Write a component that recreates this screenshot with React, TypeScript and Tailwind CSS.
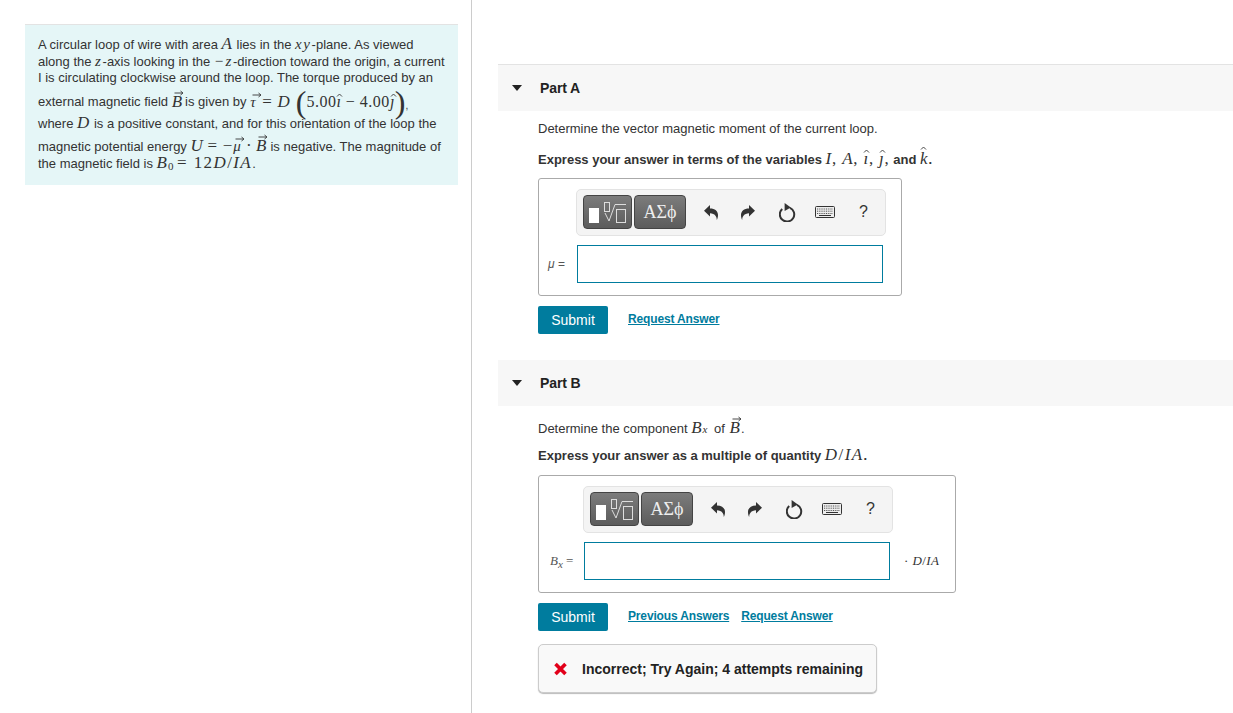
import React from 'react';

const mathFont = "font-['Liberation_Serif',serif] font-normal leading-[0]";

function V({ children }: { children: React.ReactNode }) {
  return <i className={`${mathFont} text-[17px] tracking-[1px]`}>{children}</i>;
}

function Low({ children }: { children: React.ReactNode }) {
  return <i className={`${mathFont} text-[15px] tracking-[1.6px]`}>{children}</i>;
}

function M({ children }: { children: React.ReactNode }) {
  return <span className={`${mathFont} text-[17px] tracking-[0.8px]`}>{children}</span>;
}

function Wide({ children }: { children: React.ReactNode }) {
  return <span className={`${mathFont} text-[17px] tracking-[1.4px]`}>{children}</span>;
}

function Over({ children, mark, top }: { children: React.ReactNode; mark: 'vec' | 'hat'; top?: string }) {
  return (
    <span className="relative">
      {mark === 'vec' ? (
        <svg className={`absolute left-[2px] ${top ?? 'top-[-2px]'}`} width="10" height="6" viewBox="0 0 10 6">
          <path d="M0.5 3H8.5M6.5 1L9 3L6.5 5" fill="none" stroke="currentColor" strokeWidth="0.9" />
        </svg>
      ) : (
        <svg className={`absolute left-[0px] ${top ?? 'top-[0px]'}`} width="7" height="4" viewBox="0 0 7 4">
          <path d="M1 3.5L3.5 1L6 3.5" fill="none" stroke="currentColor" strokeWidth="0.9" />
        </svg>
      )}
      {children}
    </span>
  );
}

function TemplateIcon() {
  return (
    <svg width="38" height="23" viewBox="0 0 38 23">
      <rect x="0" y="7" width="10" height="15" fill="#fff" />
      <rect x="15.5" y="1.5" width="5" height="9" fill="none" stroke="#ddd" strokeWidth="1" />
      <path d="M16 12L20 20L26 3.5H37" fill="none" stroke="#ddd" strokeWidth="1" />
      <rect x="27.5" y="8.5" width="9" height="13" fill="none" stroke="#ddd" strokeWidth="1" />
    </svg>
  );
}

function KeyboardIcon() {
  return (
    <svg width="20" height="12" viewBox="0 0 20 12">
      <rect x="0.5" y="0.5" width="19" height="11" rx="1" fill="#eee" stroke="#333" strokeWidth="1" />
      <path d="M2 3H18M2 5.2H18" stroke="#555" strokeWidth="1" strokeDasharray="1 0.8" />
      <path d="M2 7.5H18" stroke="#555" strokeWidth="1" strokeDasharray="1 0.8" />
      <path d="M4 9.5H16" stroke="#333" strokeWidth="1" />
    </svg>
  );
}

function ResetIcon() {
  return (
    <svg width="17" height="19" viewBox="0 0 17 19">
      <path d="M11 4.8A7.2 7.2 0 1 1 3.2 6" fill="none" stroke="#333" strokeWidth="2" />
      <path d="M5.6 0L11.8 4.6L5.6 8Z" fill="#333" />
    </svg>
  );
}

function UndoIcon({ flip }: { flip?: boolean }) {
  return (
    <svg className={flip ? '-scale-x-100' : ''} width="14" height="15" viewBox="0 0 14 15">
      <path d="M0 5.7L6 0V3.4C11 3.4 14 6 14 10C14 12 13.5 13.8 12.8 15C12.8 11.5 11 8.5 6 8.2V11.5Z" fill="#333" />
    </svg>
  );
}

function Toolbar() {
  return (
    <div className="flex h-[47px] w-[310px] items-center rounded-[5px] border border-[#e3e3e3] bg-[#f4f4f4] pb-[1px] pl-[6px]">
      <div className="flex h-[34px] w-[49px] items-center justify-center rounded-[4px] border border-[#444] bg-gradient-to-b from-[#7c7c7c] to-[#5c5c5c]">
        <TemplateIcon />
      </div>
      <div className="ml-[2px] flex h-[34px] w-[52px] items-center justify-center rounded-[4px] border border-[#444] bg-gradient-to-b from-[#7c7c7c] to-[#5c5c5c] font-['Liberation_Serif',serif] text-[18px] text-[#eee]">
        ΑΣϕ
      </div>
      <div className="ml-[18px] flex"><UndoIcon /></div>
      <div className="ml-[23px] flex"><UndoIcon flip /></div>
      <div className="ml-[24px] flex"><ResetIcon /></div>
      <div className="ml-[19px] flex"><KeyboardIcon /></div>
      <span className="ml-[24px] text-[16px] text-[#333]">?</span>
    </div>
  );
}

function AnswerBox({ className, label, labelPad, suffix }: { className: string; label: React.ReactNode; labelPad: string; suffix?: React.ReactNode }) {
  return (
    <div className={`${className} h-[118px] rounded-[3px] border border-[#aaa] bg-white pt-[10px]`}>
      <Toolbar />
      <div className="mt-[9px] flex items-center">
        <div className={`ml-[-38px] flex w-[39px] shrink-0 justify-start ${labelPad} text-[12px] text-[#555]`}>{label}</div>
        <div className="h-[38px] w-[306px] border border-[#007c9e] bg-white" />
        {suffix}
      </div>
    </div>
  );
}

function PartHeader({ title, className }: { title: string; className: string }) {
  return (
    <div className={`flex items-center bg-[#f7f7f7] ${className}`}>
      <span className="ml-[14px] h-0 w-0 border-x-[5.5px] border-t-[6px] border-x-transparent border-t-[#222]" />
      <span className="ml-[18px] text-[14px] font-bold tracking-[-0.1px] text-[#222]">{title}</span>
    </div>
  );
}

function SubmitButton() {
  return (
    <button className="flex h-[28px] w-[70px] items-center justify-center rounded-[2px] bg-[#007c9e] text-[14px] text-white">Submit</button>
  );
}

function LinkText({ children }: { children: React.ReactNode }) {
  return <a className="text-[12px] font-bold tracking-[-0.15px] text-[#007c9e] underline">{children}</a>;
}

export default function App() {
  return (
    <div className="flex h-[713px] w-[1233px] overflow-hidden bg-white font-['Liberation_Sans',Arial,sans-serif] text-[#333]">
      <div className="h-full w-[472px] shrink-0 border-r border-[#ccc] pl-[25px] pt-[24px]">
        <div className="h-[161px] w-[433px] border-t border-[#e3e3e3] bg-[#e5f6f7] pl-[13px] pt-[12px] text-[13px] leading-[16px] whitespace-nowrap">
          <div>A circular loop of wire with area <V>A</V> lies in the <Low>xy</Low>-plane. As viewed</div>
          <div className="mt-[1px]">along the <Low>z</Low>-axis looking in the <Low>−z</Low>-direction toward the origin, a current</div>
          <div>I is circulating clockwise around the loop. The torque produced by an</div>
          <div className="flex h-[32px] items-center">
            <span>external magnetic field&nbsp;</span>
            <V><Over mark="vec">B</Over></V>
            <span className="ml-[2px]">is given by&nbsp;</span>
            <Low><Over mark="vec">τ</Over></Low>
            <M>&nbsp;= <i>D</i>&nbsp;</M>
            <span className="font-['Liberation_Serif',serif] text-[32px] font-light leading-[32px]">(</span>
            <span className={`${mathFont} text-[16px] tracking-[0.5px]`}>5.00<i><Over mark="hat">ı</Over></i> − 4.00<i><Over mark="hat">ȷ</Over></i></span>
            <span className="font-['Liberation_Serif',serif] text-[32px] font-light leading-[32px]">)</span>
            <span className="mt-[8px] text-[10px]">,</span>
          </div>
          <div className="mt-[-2px]">where <V>D</V> is a positive constant, and for this orientation of the loop the</div>
          <div className="mt-[7px]">magnetic potential energy <V>U</V> <M>= −</M><Low><Over mark="vec">μ</Over></Low> <M>·</M> <V><Over mark="vec">B</Over></V><span className="ml-[3px]">is negative. The magnitude of</span></div>
          <div className="mt-[1px]">the magnetic field is <V>B</V><span className={`${mathFont} relative top-[2px] text-[11px]`}>0</span> <Wide>= 12<i>D</i>/<i>IA</i></Wide>.</div>
        </div>
      </div>

      <div className="ml-[26px] min-w-0 flex-1 pt-[64px]">
        <PartHeader title="Part A" className="h-[47px] border-t border-[#e3e3e3]" />
        <div className="pl-[40px]">
          <p className="mt-[10px] text-[13px] leading-[16px]">Determine the vector magnetic moment of the current loop.</p>
          <p className="mt-[13px] h-[20px] text-[13px] font-bold leading-[20px] whitespace-nowrap">
            Express your answer in terms of the variables <M><i>I</i>, <i>A</i>, <i><Over mark="hat">ı</Over></i>, <i><Over mark="hat">ȷ</Over></i>,</M> and <M><i><Over mark="hat" top="top-[-3px]">k</Over></i></M>.
          </p>
          <AnswerBox
            className="mt-[8px] w-[364px] pl-[37px]"
            labelPad="pl-[10px]"
            label={<i className="whitespace-nowrap">μ <span className="not-italic">=</span></i>}
          />
          <div className="mt-[10px] flex items-start">
            <SubmitButton />
            <div className="ml-[20px] mt-[4px] flex gap-[12px]"><LinkText>Request Answer</LinkText></div>
          </div>
        </div>

        <PartHeader title="Part B" className="mt-[26px] h-[46px]" />
        <div className="pl-[40px]">
          <p className="mt-[13px] h-[20px] text-[13px] leading-[20px] whitespace-nowrap">
            Determine the component <V>B</V><i className={`${mathFont} mr-[3px] text-[11px]`}>x</i> of <V><span className="ml-[1px]"><Over mark="vec">B</Over></span></V>.
          </p>
          <p className="mt-[7px] h-[20px] text-[13px] font-bold leading-[20px] whitespace-nowrap">
            Express your answer as a multiple of quantity <Wide><i>D</i>/<i>IA</i></Wide>.
          </p>
          <AnswerBox
            className="mt-[9px] w-[418px] pl-[44px]"
            labelPad="pl-[5px]"
            label={
              <span className="whitespace-nowrap font-['Liberation_Serif',serif] text-[13px]">
                <i>B<sub className="text-[11px]">x</sub></i> =
              </span>
            }
            suffix={<span className="ml-[14px] whitespace-nowrap font-['Liberation_Serif',serif] text-[13px] tracking-[0.4px]">· <i>D</i>/<i>IA</i></span>}
          />
          <div className="mt-[10px] flex items-start">
            <SubmitButton />
            <div className="ml-[20px] mt-[4px] flex gap-[12px]">
              <LinkText>Previous Answers</LinkText>
              <LinkText>Request Answer</LinkText>
            </div>
          </div>
          <div className="mt-[13px] flex h-[49px] w-[339px] items-center rounded-[5px] border border-[#ccc] bg-[#f9f9f9] pl-[14px] shadow-[0_1px_1px_#bbb]">
            <svg width="15" height="14" viewBox="0 0 15 14">
              <path d="M2.5 2L12.5 12M12.5 2L2.5 12" fill="none" stroke="#e2001a" strokeWidth="3.6" />
            </svg>
            <span className="ml-[14px] mt-[2px] text-[14px] font-bold text-[#222]">Incorrect; Try Again; 4 attempts remaining</span>
          </div>
        </div>
      </div>
    </div>
  );
}
